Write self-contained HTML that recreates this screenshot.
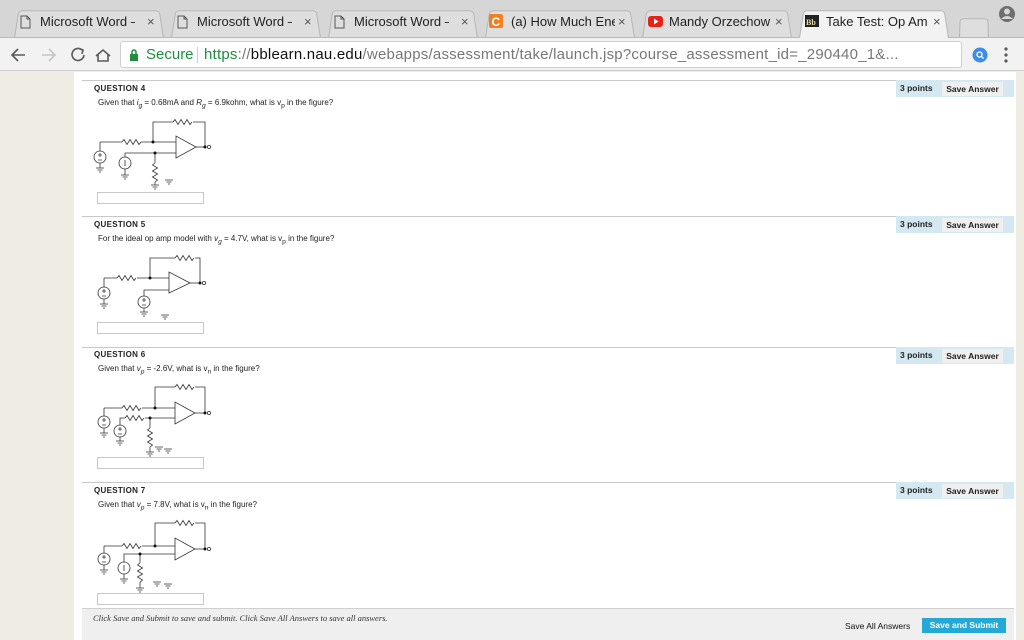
<!DOCTYPE html>
<html><head><meta charset="utf-8">
<style>
*{margin:0;padding:0;box-sizing:border-box}
body{width:1024px;height:640px;overflow:hidden;position:relative;background:#efece4;font-family:"Liberation Sans",Arial,sans-serif}
.abs{position:absolute}
#tabs{left:0;top:0;width:1024px;height:38px;background:#d6d6d6}
.tab{position:absolute;top:8px;height:30px;background:#dedede;border:1px solid #b4b4b4;border-bottom:none;transform:perspective(100px) rotateX(12deg);transform-origin:bottom;border-radius:4px 4px 0 0}
.tt{position:absolute;top:14px;font-size:13px;color:#222;white-space:nowrap;overflow:hidden}
.tx{position:absolute;top:14px;font-size:13px;color:#555}
#bar{left:0;top:37px;width:1024px;height:34px;background:#f2f2f2;border-top:1px solid #b8b8b8;border-bottom:1px solid #cfcfcf}
#url{left:120px;top:41px;width:842px;height:27px;background:#fff;border:1px solid #d0d0d0;border-radius:3px;font-size:15px;line-height:25px;white-space:nowrap}
#content{left:74px;top:72px;width:942px;height:568px;background:#fff}
.hr{position:absolute;left:82px;width:932px;height:1px;background:#c8c8c8}
.qt{position:absolute;left:94px;font-size:8px;font-weight:bold;color:#222;letter-spacing:.3px}
.qx{position:absolute;left:98px;font-size:8px;color:#222}
.pts{position:absolute;left:896px;width:118px;height:17px;background:#d3e8f0}
.pts b{position:absolute;left:4px;top:3px;font-size:8.5px;color:#222}
.pts span{position:absolute;left:46px;top:2px;width:61px;height:14px;background:#efefef;font-size:8.5px;font-weight:bold;color:#222;text-align:center;line-height:14px}
.box{position:absolute;left:97px;width:107px;height:12px;border:1px solid #c8c8c8;background:#fff}
</style></head><body>
<div id="tabs" class="abs"></div>
<div class="tab" style="left:14px;width:150px"></div>
<div class="tab" style="left:171px;width:150px"></div>
<div class="tab" style="left:328px;width:150px"></div>
<div class="tab" style="left:485px;width:150px"></div>
<div class="tab" style="left:642px;width:150px"></div>
<div class="tab" style="left:799px;width:150px;background:#f2f2f2;z-index:2"></div>
<div class="tab" style="left:959px;width:30px;top:17px;height:21px"></div>
<svg class="abs" style="left:0;top:0;z-index:3" width="1024" height="38">
<g fill="none" stroke="#555" stroke-width="1">
<path d="M21 16h6l3 3v9h-9z M27 16v3h3"/><path d="M178 16h6l3 3v9h-9z M184 16v3h3"/><path d="M335 16h6l3 3v9h-9z M341 16v3h3"/>
</g>
<rect x="489" y="14" width="14" height="14" rx="2" fill="#f38020"/><text x="491.5" y="26" font-size="12" font-weight="bold" fill="#fff" font-family="Liberation Sans">C</text>
<rect x="648" y="16" width="15" height="11" rx="3" fill="#e62117"/><path d="M654 18.5v6l4.5-3z" fill="#fff"/>
<rect x="805" y="15" width="14" height="12" fill="#222"/><text x="806" y="25" font-size="8" font-weight="bold" fill="#e8d9a0" font-family="Liberation Serif">Bb</text>
<circle cx="1007" cy="14" r="8" fill="#6e6e6e"/><circle cx="1007" cy="11.5" r="3" fill="#d6d6d6"/><path d="M1001 19q6-6 12 0" fill="#d6d6d6"/>
</svg>
<div class="tt" style="left:40px;width:95px;z-index:3">Microsoft Word –</div><div class="tx" style="left:147px;z-index:3">×</div>
<div class="tt" style="left:197px;width:95px;z-index:3">Microsoft Word –</div><div class="tx" style="left:304px;z-index:3">×</div>
<div class="tt" style="left:354px;width:95px;z-index:3">Microsoft Word –</div><div class="tx" style="left:461px;z-index:3">×</div>
<div class="tt" style="left:511px;width:104px;z-index:3">(a) How Much Ene</div><div class="tx" style="left:618px;z-index:3">×</div>
<div class="tt" style="left:669px;width:104px;z-index:3">Mandy Orzechow</div><div class="tx" style="left:775px;z-index:3">×</div>
<div class="tt" style="left:826px;width:104px;z-index:3">Take Test: Op Am</div><div class="tx" style="left:933px;z-index:3">×</div>
<div id="bar" class="abs"></div>
<svg class="abs" style="left:0;top:38px" width="1024" height="34">
<g fill="none" stroke="#5a5a5a" stroke-width="1.6">
<path d="M12 17h13 M18 11l-6 6 6 6"/><path d="M42 17h13 M49 11l6 6-6 6" stroke="#c4c4c4"/>
<path d="M82 12a6 6 0 1 0 2 5 M79 10.5l4 1.5-1 4"/><path d="M96 18l7-6 7 6 M98 16v7h10v-7"/>
<circle cx="928" cy="15" r="5"/><path d="M932 19l4 4 M925.5 15h5"/>
<path d="M954 9l2 5 5 .3-4 3.3 1.5 5-4.5-3-4.5 3 1.5-5-4-3.3 5-.3z" stroke-width="1.2"/>
</g>
<circle cx="980" cy="17" r="7.5" fill="#3a8ee6"/><circle cx="979.5" cy="16.5" r="2.5" fill="none" stroke="#fff" stroke-width="1.3"/><path d="M981.5 18.5l2 2" stroke="#fff" stroke-width="1.3"/>
<g fill="#5a5a5a"><circle cx="1006" cy="11" r="1.6"/><circle cx="1006" cy="17" r="1.6"/><circle cx="1006" cy="23" r="1.6"/></g>
</svg>
<div id="url" class="abs"><svg style="position:absolute;left:8px;top:7px" width="10" height="12"><rect x="1" y="5" width="8" height="7" fill="#1e8e3e"/><path d="M3 5V3a2 2 0 0 1 4 0v2" fill="none" stroke="#1e8e3e" stroke-width="1.5"/></svg><span style="position:absolute;left:25px;color:#1e8e3e">Secure</span><span style="position:absolute;left:76px;top:5px;width:1px;height:16px;background:#ccc"></span><span style="position:absolute;left:83px;letter-spacing:.22px"><span style="color:#1e8e3e">https</span><span style="color:#777">://</span><span style="color:#111">bblearn.nau.edu</span><span style="color:#777">/webapps/assessment/take/launch.jsp?course_assessment_id=_290440_1&amp;...</span></span></div>

<div id="content" class="abs"></div>
<div class="hr" style="top:80px"></div>
<div class="qt" style="top:84px">QUESTION 4</div>
<div class="qx" style="top:98px">Given that <i>i<sub>g</sub></i> = 0.68mA and <i>R<sub>g</sub></i> = 6.9kohm, what is v<sub>p</sub> in the figure?</div>
<div class="pts" style="top:80px"><b>3 points</b><span>Save Answer</span></div>
<div class="box" style="top:192px"></div>

<div class="hr" style="top:216px"></div>
<div class="qt" style="top:220px">QUESTION 5</div>
<div class="qx" style="top:234px">For the ideal op amp model with <i>v<sub>g</sub></i> = 4.7V, what is v<sub>p</sub> in the figure?</div>
<div class="pts" style="top:216px"><b>3 points</b><span>Save Answer</span></div>
<div class="box" style="top:322px"></div>

<div class="hr" style="top:347px"></div>
<div class="qt" style="top:350px">QUESTION 6</div>
<div class="qx" style="top:364px">Given that <i>v<sub>p</sub></i> = -2.6V, what is v<sub>n</sub> in the figure?</div>
<div class="pts" style="top:347px"><b>3 points</b><span>Save Answer</span></div>
<div class="box" style="top:457px"></div>

<div class="hr" style="top:482px"></div>
<div class="qt" style="top:486px">QUESTION 7</div>
<div class="qx" style="top:500px">Given that <i>v<sub>p</sub></i> = 7.8V, what is v<sub>n</sub> in the figure?</div>
<div class="pts" style="top:482px"><b>3 points</b><span>Save Answer</span></div>
<div class="box" style="top:593px"></div>

<svg class="abs" style="left:0;top:0" width="1024" height="640">
<defs>
<path id="zz" d="M0 0l2-2.5l3 5l3-5l3 5l3-5l3 5l2-2.5" fill="none"/>
<path id="zv" d="M0 0l-2.5 2l5 3l-5 3l5 3l-5 3l5 3l-2.5 2" fill="none"/>
<path id="gnd" d="M-4 0h8M-2.5 2h5M-1 4h2" fill="none"/>
<path id="pl" d="M-2 -2h4M0 -4v4M-2 3h4" fill="none"/>
</defs>
<g stroke="#333" stroke-width="0.8" fill="none">
<path d="M153 142V122h20M193 122h12v25M100 142h22M141 142h35M125 153h51M100 151v-9M155 153v10"/>
<use href="#zz" x="173" y="122"/><use href="#zz" x="122" y="142"/>
<path d="M176 136v22l20-11z"/><path d="M196 147h9"/>
<circle cx="100" cy="157" r="6"/><use href="#pl" x="100" y="157"/><path d="M100 163v5"/><use href="#gnd" x="100" y="168"/>
<circle cx="125" cy="163" r="6"/><path d="M125 157v-4M125 169v6M125 160v6"/><use href="#gnd" x="125" y="175"/>
<use href="#zv" x="155" y="163"/><path d="M155 182v3"/><use href="#gnd" x="155" y="185"/>
<use href="#gnd" x="169" y="180"/>
<path d="M150 278V258h25M195 258h5v25M104 278h13M137 278h32M144 296v-6h25M104 287v-9"/>
<use href="#zz" x="175" y="258"/><use href="#zz" x="117" y="278"/>
<path d="M169 272v21l21-10z"/><path d="M190 283h10"/>
<circle cx="104" cy="293" r="6"/><use href="#pl" x="104" y="293"/><path d="M104 299v5"/><use href="#gnd" x="104" y="304"/>
<circle cx="144" cy="302" r="6"/><use href="#pl" x="144" y="302"/><path d="M144 308v4"/><use href="#gnd" x="144" y="312"/>
<use href="#gnd" x="165" y="315"/>
<path d="M155 408V387h20M195 387h10v26M104 408h18M142 408h33M120 425v-7h5M145 418h30M150 418v10M104 416v-8"/>
<use href="#zz" x="175" y="387"/><use href="#zz" x="122" y="408"/><use href="#zz" x="125" y="418"/>
<path d="M175 402v22l20-11z"/><path d="M195 413h10"/>
<circle cx="104" cy="422" r="6"/><use href="#pl" x="104" y="422"/><path d="M104 428v5"/><use href="#gnd" x="104" y="433"/>
<circle cx="120" cy="431" r="6"/><use href="#pl" x="120" y="431"/><path d="M120 437v4"/><use href="#gnd" x="120" y="441"/>
<use href="#zv" x="150" y="428"/><path d="M150 447v5"/><use href="#gnd" x="150" y="452"/>
<use href="#gnd" x="159" y="447"/><use href="#gnd" x="168" y="449"/>
<path d="M155 546V523h20M195 523h10v26M104 546h18M142 546h33M124 562v-8h51M140 554v9M104 553v-7"/>
<use href="#zz" x="175" y="523"/><use href="#zz" x="122" y="546"/>
<path d="M175 538v22l20-11z"/><path d="M195 549h10"/>
<circle cx="104" cy="559" r="6"/><use href="#pl" x="104" y="559"/><path d="M104 565v5"/><use href="#gnd" x="104" y="570"/>
<circle cx="124" cy="568" r="6"/><path d="M124 565v6M124 574v5"/><use href="#gnd" x="124" y="579"/>
<use href="#zv" x="140" y="563"/><path d="M140 582v6"/><use href="#gnd" x="140" y="588"/>
<use href="#gnd" x="157" y="582"/><use href="#gnd" x="168" y="584"/>
</g>
<g fill="#111">
<circle cx="153" cy="142" r="1.5"/><circle cx="155" cy="153" r="1.5"/><circle cx="205" cy="147" r="1.5"/>
<circle cx="150" cy="278" r="1.5"/><circle cx="200" cy="283" r="1.5"/>
<circle cx="155" cy="408" r="1.5"/><circle cx="150" cy="418" r="1.5"/><circle cx="205" cy="413" r="1.5"/>
<circle cx="155" cy="546" r="1.5"/><circle cx="140" cy="554" r="1.5"/><circle cx="205" cy="549" r="1.5"/>
</g>
<g fill="#fff" stroke="#333" stroke-width="0.8">
<circle cx="209" cy="147" r="1.6"/><circle cx="204" cy="283" r="1.6"/><circle cx="209" cy="413" r="1.6"/><circle cx="209" cy="549" r="1.6"/>
</g>
</svg>

<div class="abs" style="left:82px;top:608px;width:932px;height:32px;background:#efefef;border-top:1px solid #cfcfcf"></div>
<div class="abs" style="left:93px;top:613px;font-family:'Liberation Serif',serif;font-style:italic;font-size:8.5px;color:#333">Click Save and Submit to save and submit. Click Save All Answers to save all answers.</div>
<div class="abs" style="left:845px;top:621px;font-size:8.5px;color:#111">Save All Answers</div>
<div class="abs" style="left:922px;top:618px;width:84px;height:15px;background:#24a9d6;color:#fff;font-size:8.5px;font-weight:bold;text-align:center;line-height:15px">Save and Submit</div>
</body></html>
